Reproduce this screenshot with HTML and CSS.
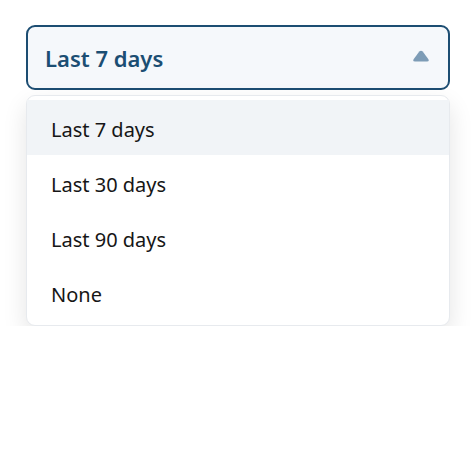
FILE: index.html
```html
<!DOCTYPE html>
<html>
<head>
<meta charset="utf-8">
<link rel="stylesheet" href="styles.css">
</head>
<body>
<div class="wrap">
  <div class="select">
    <span class="value">Last 7 days</span>
    <svg class="caret" width="18" height="13" viewBox="0 0 18 13"><path d="M7.3 1.6 Q9 -0.2 10.7 1.6 L16.4 9.2 Q17.6 11.5 15 11.5 L3 11.5 Q0.4 11.5 1.6 9.2 Z" fill="#7d9cb6"/></svg>
  </div>
  <ul class="menu">
    <li class="item active">Last 7 days</li>
    <li class="item">Last 30 days</li>
    <li class="item">Last 90 days</li>
    <li class="item">None</li>
  </ul>
</div>
</body>
</html>
```
FILE: styles.css
```css
html, body { margin: 0; padding: 0; background: #fff; }
body { font-family: "Noto Sans", "Open Sans", sans-serif; }
.wrap { padding: 25px 24px 0 26px; display: flex; flex-direction: column; gap: 5px; }
.select {
  height: 65px; box-sizing: border-box;
  border: 2.5px solid #1c4d72; border-radius: 9px;
  background: #f5f8fb;
  display: flex; align-items: center; justify-content: space-between;
  padding: 0 18px 0 17px;
}
.value { font-size: 22px; font-weight: 600; color: #1b4e73; margin-top: 1px; }
.caret { display: block; margin-top: -2px; }
.menu {
  list-style: none; margin: 0; padding: 4px 0 5px;
  background: #fff; border-radius: 9px;
  border: 1px solid #e7eaee;
  box-shadow: 0 10px 24px rgba(0,0,0,0.11);
}
.item {
  height: 55px; box-sizing: border-box; display: flex; align-items: center;
  padding: 4px 24px 0; font-size: 20px; color: #161616;
}
.item.active { background: #f1f4f7; }
```
